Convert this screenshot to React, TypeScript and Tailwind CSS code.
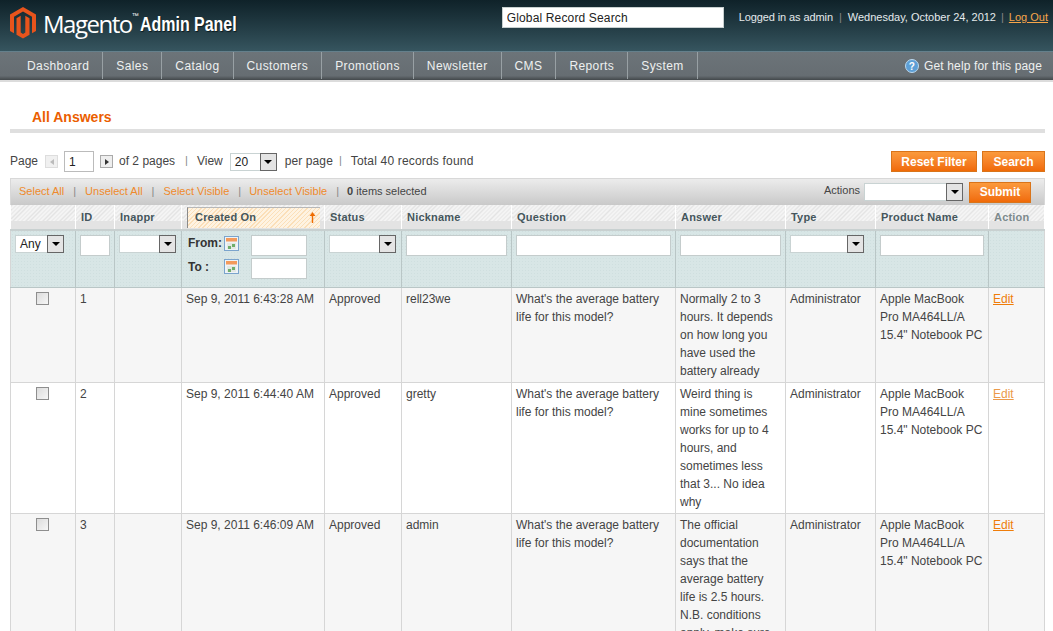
const navItems = ["Dashboard", "Sales", "Catalog", "Customers", "Promotions", "Newsletter", "CMS", "Reports", "System"];

const columns = [
  { name: "", width: 65 },
  { name: "ID", width: 39 },
  { name: "Inappr", width: 67 },
  { name: "Created On", width: 143 },
  { name: "Status", width: 77 },
  { name: "Nickname", width: 110 },
  { name: "Question", width: 164 },
  { name: "Answer", width: 110 },
  { name: "Type", width: 90 },
  { name: "Product Name", width: 113 },
  { name: "Action", width: 56 },
];

const rows = [
  {
    id: 1,
    date: "Sep 9, 2011 6:43:28 AM",
    nick: "rell23we",
    answer: "Normally 2 to 3 hours. It depends on how long you have used the battery already",
    height: "h-[95px]",
    bg: "bg-[#f6f6f6]",
  },
  {
    id: 2,
    date: "Sep 9, 2011 6:44:40 AM",
    nick: "gretty",
    answer: "Weird thing is mine sometimes works for up to 4 hours, and sometimes less that 3... No idea why",
    height: "h-[131px]",
    bg: "bg-white",
  },
  {
    id: 3,
    date: "Sep 9, 2011 6:46:09 AM",
    nick: "admin",
    answer: "The official documentation says that the average battery life is 2.5 hours. N.B. conditions apply, make sure you read them",
    height: "h-[203px]",
    bg: "bg-[#f6f6f6]",
  },
];

const Logo = () => (
  <svg width="28" height="32" viewBox="0 0 28 32" className="shrink-0">
    <path d="M14 0 L27 7.5 V24 L23 26.3 V9.8 L14 4.6 L5 9.8 V26.3 L1 24 V7.5 Z" fill="#e8541c" />
    <path d="M7.5 11.2 L11.7 8.8 V25.5 L14 26.9 L16.3 25.5 V8.8 L20.5 11.2 V27.8 L14 31.5 L7.5 27.8 Z" fill="#e8541c" />
  </svg>
);

const SelectBox = ({ width, value = "" }: { width: string; value?: string }) => (
  <div className={`${width} h-[18px] flex items-center bg-white border border-[#c9d3d3] text-[12px] text-[#222]`}>
    <span className="flex-1 pl-1 leading-none">{value}</span>
    <span className="w-[17px] h-[18px] -mr-px flex items-center justify-center bg-[#e4e4e4] border border-[#666]">
      <span className="w-0 h-0 border-x-[4px] border-x-transparent border-t-[4px] border-t-black" />
    </span>
  </div>
);

const Field = ({ width }: { width: string }) => (
  <div className={`${width} h-[21px] bg-white border border-[#c4cccc]`} />
);

const CalendarIcon = () => (
  <svg width="15" height="15" viewBox="0 0 15 15" className="shrink-0 mb-[4px]">
    <rect x="0.5" y="0.5" width="14" height="14" fill="#eef3f7" stroke="#7ba4cc" />
    <rect x="2" y="2" width="11" height="3.5" fill="#f39a5c" />
    <rect x="3" y="7" width="9" height="6" fill="#e3e8e4" />
    <rect x="4" y="10" width="3" height="3" fill="#6fae6b" />
    <rect x="8" y="8" width="3" height="3" fill="#6fae6b" />
  </svg>
);

const OrangeButton = ({ label, width, className = "" }: { label: string; width: string; className?: string }) => (
  <button
    className={`${width} ${className} h-[21px] border border-[#d9741a] bg-gradient-to-b from-[#fb9a3c] to-[#f06a06] text-white text-[12px] font-bold font-['Liberation_Sans',sans-serif]`}
  >
    {label}
  </button>
);

const Sep = ({ pad }: { pad: string }) => <span className={`text-[#888] text-[11px] ${pad}`}>|</span>;

const App = () => {
  return (
    <div className="h-[631px] w-[1053px] overflow-hidden bg-white font-['Liberation_Sans',Arial,sans-serif] text-[12px] text-[#444]">
      <header className="h-[51px] bg-gradient-to-b from-[#0f2229] to-[#36555f] flex items-start pl-[9px] pr-[5px]">
        <div className="mt-[7px]">
          <Logo />
        </div>
        <span className="ml-[6px] mt-[7px] text-[24px] leading-[34px] tracking-[-1.5px] text-white whitespace-nowrap font-['Open_Sans',sans-serif]">
          Magento
        </span>
        <span className="mt-[11px] text-[7px] leading-[10px] text-white">™</span>
        <span className="mt-[8px] ml-[1px] w-[100px] text-[21px] leading-[32px] font-bold text-white whitespace-nowrap origin-left scale-x-[0.76] [text-shadow:1px_1px_1px_#0b1a1f] font-['Liberation_Sans',sans-serif]">
          Admin Panel
        </span>
        <div className="ml-auto mt-[7px] flex items-center">
          <input
            readOnly
            defaultValue="Global Record Search"
            className="w-[222px] h-[21px] bg-white border border-[#c8d0d0] px-[4px] text-[12px] tracking-[0.15px] text-[#222] outline-none"
          />
          <div className="ml-[15px] flex items-center whitespace-nowrap text-[11px] text-[#e4eaec] h-[21px]">
            <span className="tracking-[-0.1px]">Logged in as admin</span>
            <Sep pad="px-[6px]" />
            <span>Wednesday, October 24, 2012</span>
            <Sep pad="px-[5px]" />
            <a className="text-[#f6a54a] underline">Log Out</a>
          </div>
        </div>
      </header>

      <nav className="h-[29px] bg-[linear-gradient(to_bottom,#6c7479_0%,#666d72_85%,#43484b_100%)] border-t border-[#64808c] flex items-stretch pl-[14px] pr-[11px] text-[12px] tracking-[0.4px] text-[#eef0f0]">
        {navItems.map((item) => (
          <a key={item} className="px-[13px] flex items-center border-r border-[#98a0a4] mb-[1px] whitespace-nowrap">
            {item}
          </a>
        ))}
        <div className="ml-auto flex items-center gap-[5px]">
          <svg width="14" height="14" viewBox="0 0 14 14">
            <circle cx="7" cy="7" r="6.5" fill="#5d9fd6" stroke="#bcd9ef" />
            <text x="7" y="10.5" textAnchor="middle" fontSize="10" fontWeight="700" fill="#fff">?</text>
          </svg>
          <span className="tracking-[0.15px]">Get help for this page</span>
        </div>
      </nav>
      <div className="h-[2px] bg-[#dcdcdc]" />

      <main className="px-[10px] pr-[8px]">
        <h3 className="mt-[26px] pl-[22px] text-[14px] leading-[18px] font-bold text-[#eb5e00]">All Answers</h3>
        <div className="mt-[3px] h-[4px] bg-[#dfdfdf]" />

        <div className="mt-[18px] h-[21px] flex items-center">
          <span className="mb-[2px]">Page</span>
          <span className="ml-[7px] w-[13px] h-[13px] bg-[#f0f0f0] border border-[#ddd] flex items-center justify-center">
            <span className="w-0 h-0 border-y-[3px] border-y-transparent border-r-[4px] border-r-[#bbb]" />
          </span>
          <div className="ml-[6px] w-[30px] h-[21px] bg-white border border-[#bbb] pl-[4px] leading-[21px] text-[#222]">1</div>
          <span className="ml-[6px] w-[13px] h-[13px] bg-[#eee] border border-[#aaa] flex items-center justify-center">
            <span className="w-0 h-0 border-y-[3px] border-y-transparent border-l-[4px] border-l-[#333]" />
          </span>
          <span className="ml-[6px] mb-[2px]">of 2 pages</span>
          <span className="text-[#888] text-[11px] pl-[10px] pr-[9px] mb-[2px]">|</span>
          <span className="mb-[2px]">View</span>
          <div className="ml-[7px]">
            <SelectBox width="w-[47px]" value="20" />
          </div>
          <span className="ml-[8px] mb-[2px] tracking-[0.1px]">per page</span>
          <span className="text-[#888] text-[11px] pl-[6px] pr-[9px] mb-[2px]">|</span>
          <span className="mb-[2px] tracking-[0.18px]">Total 40 records found</span>
          <div className="ml-auto flex gap-[5px]">
            <OrangeButton label="Reset Filter" width="w-[86px]" />
            <OrangeButton label="Search" width="w-[63px]" />
          </div>
        </div>

        <div className="mt-[6px] h-[27px] bg-gradient-to-b from-[#ececec] to-[#c9c9c9] border border-[#d8d8d8] border-b-0 flex items-center pl-[8px] pr-[13px] text-[11px]">
          <a className="text-[#ef8a2c] mb-[2px]">Select All</a>
          <Sep pad="px-[9px] mb-[1px]" />
          <a className="text-[#ef8a2c] mb-[2px]">Unselect All</a>
          <Sep pad="px-[9px] mb-[1px]" />
          <a className="text-[#ef8a2c] mb-[2px]">Select Visible</a>
          <Sep pad="pl-[9px] pr-[8px] mb-[1px]" />
          <a className="text-[#ef8a2c] mb-[2px]">Unselect Visible</a>
          <Sep pad="pl-[9px] pr-[8px] mb-[1px]" />
          <span className="mb-[2px]">
            <b>0</b> items selected
          </span>
          <span className="ml-auto mr-[4px] mb-[4px]">Actions</span>
          <SelectBox width="w-[99px]" />
          <OrangeButton label="Submit" width="w-[62px]" className="ml-[6px]" />
        </div>

        <table className="table-fixed border-collapse w-[1034px]">
          <colgroup>
            {columns.map((col, i) => (
              <col key={i} style={{ width: col.width }} />
            ))}
          </colgroup>
          <thead>
            <tr className="h-[25px]">
              {columns.map((col) => (
                <th
                  key={col.name}
                  className={`border-x border-x-white border-b-2 border-b-[#c8d0d0] p-0 text-left text-[11px] font-bold tracking-[0.2px] ${
                    col.name === "Action" ? "text-[#7d8a8c]" : "text-[#45565c]"
                  } bg-[linear-gradient(to_bottom,transparent_0%,transparent_68%,#e3e3e3_68%,#e3e3e3_100%),repeating-linear-gradient(135deg,#e4e4e4_0px,#e4e4e4_1px,#f4f4f4_1px,#f4f4f4_3px)]`}
                >
                  {col.name === "Created On" ? (
                    <div className="ml-[5px] mr-[4px] h-[21px] flex items-center justify-between pl-[7px] pr-[4px] border-l border-l-[#8a8a8a] border-t border-t-[#b8b8b8] bg-[repeating-linear-gradient(135deg,#fbdfb8_0px,#fbdfb8_1px,#fef3e2_1px,#fef3e2_3px)]">
                      <span>Created On</span>
                      <svg width="7" height="11" viewBox="0 0 7 11">
                        <path d="M3.5 0 L6.5 4 H4.2 V11 H2.8 V4 H0.5 Z" fill="#ef6c00" />
                      </svg>
                    </div>
                  ) : (
                    <span className="pl-[5px]">{col.name}</span>
                  )}
                </th>
              ))}
            </tr>
          </thead>
          <tbody>
            <tr className="h-[57px] bg-[#d8e6e6] bg-[radial-gradient(#cfdfdf_1px,transparent_1px)] bg-[length:3px_3px]">
              <td className="align-top border border-[#b9c6c6] border-l-[#d6d6d6] pt-[4px] pl-[4px]">
                <SelectBox width="w-[49px]" value="Any" />
              </td>
              <td className="align-top border border-[#b9c6c6] pt-[4px] pl-[4px]">
                <Field width="w-[30px]" />
              </td>
              <td className="align-top border border-[#b9c6c6] pt-[4px] pl-[4px]">
                <SelectBox width="w-[57px]" />
              </td>
              <td className="align-top border border-[#b9c6c6] pt-[4px] pl-[6px]">
                <div className="flex items-center h-[21px] font-bold text-[#333]">
                  <span className="w-[36px] mb-[5px]">From:</span>
                  <CalendarIcon />
                  <div className="ml-[12px]">
                    <Field width="w-[56px]" />
                  </div>
                </div>
                <div className="mt-[2px] flex items-center h-[21px] font-bold text-[#333]">
                  <span className="w-[36px] mb-[3px]">To :</span>
                  <CalendarIcon />
                  <div className="ml-[12px]">
                    <Field width="w-[56px]" />
                  </div>
                </div>
              </td>
              <td className="align-top border border-[#b9c6c6] pt-[4px] pl-[4px]">
                <SelectBox width="w-[67px]" />
              </td>
              <td className="align-top border border-[#b9c6c6] pt-[4px] pl-[4px]">
                <Field width="w-[101px]" />
              </td>
              <td className="align-top border border-[#b9c6c6] pt-[4px] pl-[4px]">
                <Field width="w-[155px]" />
              </td>
              <td className="align-top border border-[#b9c6c6] pt-[4px] pl-[4px]">
                <Field width="w-[101px]" />
              </td>
              <td className="align-top border border-[#b9c6c6] pt-[4px] pl-[4px]">
                <SelectBox width="w-[74px]" />
              </td>
              <td className="align-top border border-[#b9c6c6] pt-[4px] pl-[4px]">
                <Field width="w-[104px]" />
              </td>
              <td className="border border-[#b9c6c6] border-r-[#d6d6d6]" />
            </tr>
            {rows.map((row) => (
              <tr key={row.id} className={`${row.height} ${row.bg} align-top leading-[18px]`}>
                <td className="border border-[#d6d6d6] pt-[3px]">
                  <div className="ml-[25px] mt-[1px] w-[13px] h-[13px] border border-[#8e8e8e] bg-gradient-to-br from-[#dcdcdc] to-[#f7f7f7]" />
                </td>
                <td className="border border-[#d6d6d6] pt-[2px] px-[4px]">{row.id}</td>
                <td className="border border-[#d6d6d6]" />
                <td className="border border-[#d6d6d6] pt-[2px] px-[4px] whitespace-nowrap">{row.date}</td>
                <td className="border border-[#d6d6d6] pt-[2px] px-[4px]">Approved</td>
                <td className="border border-[#d6d6d6] pt-[2px] px-[4px]">{row.nick}</td>
                <td className="border border-[#d6d6d6] pt-[2px] px-[4px]">What's the average battery life for this model?</td>
                <td className="border border-[#d6d6d6] pt-[2px] px-[4px]">{row.answer}</td>
                <td className="border border-[#d6d6d6] pt-[2px] px-[4px]">Administrator</td>
                <td className="border border-[#d6d6d6] pt-[2px] pl-[4px] pr-[2px]">Apple MacBook Pro MA464LL/A 15.4" Notebook PC</td>
                <td className="border border-[#d6d6d6] pt-[2px] px-[4px]">
                  <a className={row.id === 2 ? "text-[#eb9a4a] underline" : "text-[#ef7d0a] underline"}>Edit</a>
                </td>
              </tr>
            ))}
          </tbody>
        </table>
      </main>
    </div>
  );
};

export default App;
